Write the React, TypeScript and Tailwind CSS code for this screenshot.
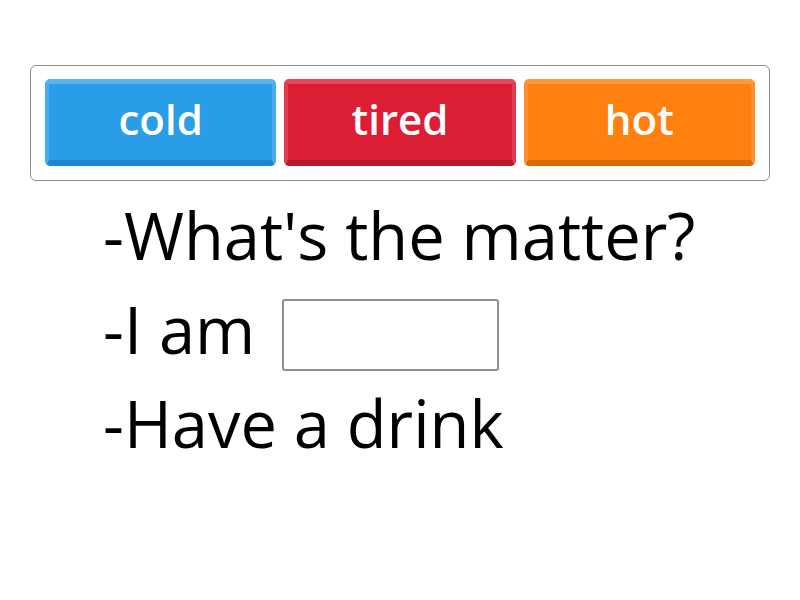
import React from "react";

const buttons = [
  { label: "cold", cls: "bg-[#2a9de8] border-t-[#5ab4f0] border-l-[#4aacee] border-r-[#4aacee] border-b-[#1c86d0]" },
  { label: "tired", cls: "bg-[#dc1e34] border-t-[#e4475a] border-l-[#e23a4f] border-r-[#e23a4f] border-b-[#b9172a]" },
  { label: "hot", cls: "bg-[#ff7f0f] border-t-[#ff973c] border-l-[#ff8f2e] border-r-[#ff8f2e] border-b-[#dc6a06]" },
];

export default function App() {
  return (
    <div className="w-[800px] h-[600px] bg-white" style={{ fontFamily: '"Open Sans", sans-serif' }}>
      <div className="pt-[65px] px-[30px]">
        <div className="h-[116px] w-[740px] border border-[#8c8c8c] rounded-[6px] pl-[14px] pr-[14px] pt-[13px] flex gap-[8px]">
          {buttons.map((b) => (
            <div
              key={b.label}
              className={`w-[232px] h-[87px] rounded-[5px] border-t-[5px] border-l-[4px] border-r-[4px] border-b-[6px] flex items-center justify-center text-white font-semibold text-[42px] leading-none pb-[7px] ${b.cls}`}
            >
              {b.label}
            </div>
          ))}
        </div>
        <div className="pl-[73px] pt-[7px] text-black text-[65px] leading-[94px]">
          <div className="h-[94px] whitespace-nowrap">-What's the matter?</div>
          <div className="h-[94px] flex items-start whitespace-nowrap">
            <span>-I am</span>
            <span className="ml-[27px] mt-[17px] w-[217px] h-[72px] border-2 border-[#8f8f8f] rounded-[3px] inline-block"></span>
          </div>
          <div className="h-[94px] whitespace-nowrap">-Have a drink</div>
        </div>
      </div>
    </div>
  );
}
